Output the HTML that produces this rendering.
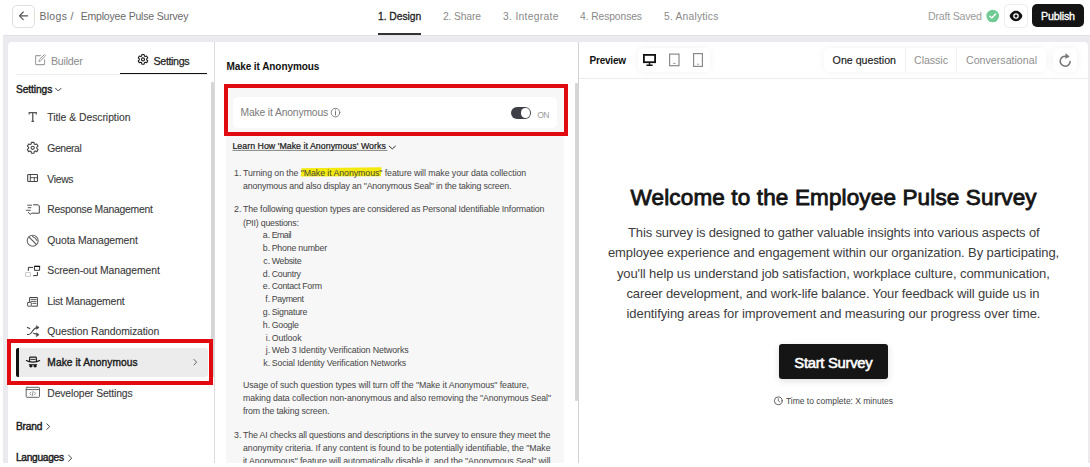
<!DOCTYPE html>
<html><head><meta charset="utf-8">
<style>
*{box-sizing:border-box;margin:0;padding:0}
html,body{width:1090px;height:467px;overflow:hidden;background:#fff;font-family:"Liberation Sans",sans-serif}
.a{position:absolute}
.t{position:absolute;white-space:nowrap;line-height:1}
#ic{position:absolute;left:0;top:0;width:1090px;height:467px;overflow:visible}
</style></head><body>
<!-- header -->
<div class="a" style="left:12px;top:5px;width:23px;height:23px;border:1px solid #e0e0e0;border-radius:5px"></div>
<div class="a" style="left:378px;top:33.4px;width:43px;height:1.8px;background:#333"></div>
<div class="a" style="left:1004px;top:4px;width:24px;height:24px;border:1px solid #eeeeee;border-radius:5px;background:#fff"></div>
<div class="a" style="left:1032px;top:4px;width:52px;height:23px;background:#141414;border-radius:5px"></div>

<!-- gray band -->
<div class="a" style="left:3px;top:35px;width:1087px;height:428px;background:#eaeaef;border-top:1px solid #e1e1e7"></div>
<!-- main white container -->
<div class="a" style="left:8px;top:42px;width:1080px;height:421px;background:#fff;border-radius:4px 4px 0 0"></div>

<!-- LEFT PANEL -->
<div class="a" style="left:16px;top:74px;width:192px;height:1px;background:#ededed"></div>
<div class="a" style="left:120px;top:72.5px;width:87px;height:1.8px;background:#111"></div>
<div class="a" style="left:211px;top:82px;width:3px;height:295px;background:#d6d6d6;border-radius:1px"></div>
<div class="a" style="left:16px;top:348px;width:192px;height:29px;background:#ececec;border-radius:3px"></div>
<div class="a" style="left:16px;top:348px;width:3px;height:29px;background:#111;border-radius:2px 0 0 2px"></div>

<!-- MIDDLE PANEL -->
<div class="a" style="left:214px;top:42px;width:1px;height:421px;background:#dcdcdc"></div>
<div class="a" style="left:226px;top:84px;width:338px;height:379px;background:#f7f7f7"></div>
<div class="a" style="left:233px;top:97px;width:324px;height:31px;background:#fff;border-radius:5px"></div>
<div class="a" style="left:511px;top:107px;width:20px;height:12px;background:#3f4047;border-radius:6px"></div>
<div class="a" style="left:520.5px;top:108.2px;width:9.6px;height:9.6px;background:#fff;border-radius:50%"></div>
<div class="a" style="left:575px;top:83px;width:3px;height:318px;background:#d6d6d6;border-radius:1px"></div>

<!-- RIGHT PANEL -->
<div class="a" style="left:578px;top:42px;width:1px;height:421px;background:#d2d2d2"></div>

<div class="a" style="left:579px;top:78px;width:509px;height:1px;background:#ececec"></div>
<div class="a" style="left:638px;top:48px;width:72px;height:24px;background:#fff;border-radius:5px;box-shadow:0 0 9px rgba(0,0,0,0.055)"></div>
<div class="a" style="left:824px;top:48px;width:222px;height:24px;background:#fff;border-radius:5px;box-shadow:0 0 9px rgba(0,0,0,0.055)"></div>
<div class="a" style="left:905px;top:48px;width:1px;height:24px;background:#f0f0f0"></div>
<div class="a" style="left:956px;top:48px;width:1px;height:24px;background:#f0f0f0"></div>
<div class="a" style="left:1053px;top:48px;width:24px;height:24px;background:#fff;border-radius:5px;box-shadow:0 0 9px rgba(0,0,0,0.055)"></div>
<div class="a" style="left:779px;top:344px;width:109px;height:35px;background:#151515;border-radius:3px;box-shadow:0 2px 7px rgba(0,0,0,0.13)"></div>

<svg id="ic" viewBox="0 0 1090 467">
<g fill="none" stroke-linecap="round" stroke-linejoin="round">
<!-- back arrow -->
<path d="M27.6 15.8H19.5M23.2 12L19.5 15.8L23.2 19.6" stroke="#555" stroke-width="1.2"/>
<!-- draft saved check -->
<circle cx="992.7" cy="16" r="6.3" fill="#6fca93" stroke="none"/>
<path d="M989.8 16.2L991.8 18.1L995.6 14.1" stroke="#fff" stroke-width="1.4"/>
<!-- eye -->
<path d="M1016 10.8C1012.6 10.8 1010.4 13.4 1009.6 16C1010.4 18.6 1012.6 21.2 1016 21.2C1019.4 21.2 1021.6 18.6 1022.4 16C1021.6 13.4 1019.4 10.8 1016 10.8Z" fill="#111" stroke="none"/>
<circle cx="1016" cy="16" r="2.8" fill="#fff" stroke="none"/>
<circle cx="1016" cy="16" r="1.5" fill="#111" stroke="none"/>

<!-- builder icon -->
<path d="M40.5 55.6H36.4C35.9 55.6 35.6 55.9 35.6 56.4V63.8C35.6 64.3 35.9 64.6 36.4 64.6H43.8C44.3 64.6 44.6 64.3 44.6 63.8V59.8" stroke="#a0a0a0" stroke-width="1.1"/>
<path d="M39 61.2L39.4 59.6L44.4 54.6L45.6 55.8L40.6 60.8Z" stroke="#9a9a9a" stroke-width="1"/>
<!-- settings tab gear -->
<path d="M141.61 55.97 L141.88 54.53 L144.12 54.53 L144.39 55.97 L145.28 56.48 L146.66 55.99 L147.78 57.94 L146.66 58.89 L146.66 59.91 L147.78 60.86 L146.66 62.81 L145.28 62.32 L144.39 62.83 L144.12 64.27 L141.88 64.27 L141.61 62.83 L140.72 62.32 L139.34 62.81 L138.22 60.86 L139.34 59.91 L139.34 58.89 L138.22 57.94 L139.34 55.99 L140.72 56.48Z" stroke="#1a1a1a" stroke-width="1.1"/>
<circle cx="143" cy="59.4" r="1.5" stroke="#1a1a1a" stroke-width="1.1"/>
<!-- settings chevron -->
<path d="M55.5 88.2L58.3 91L61.1 88.2" stroke="#333" stroke-width="0.9"/>

<!-- T icon -->
<path d="M29.2 114.6V112.6H36.3V114.6" stroke="#555" stroke-width="1.2" stroke-linecap="butt" stroke-linejoin="miter"/>
<path d="M32.75 112.6V121.3M31.4 121.3H34.1" stroke="#555" stroke-width="1.3" stroke-linecap="butt"/>
<!-- gear general -->
<path d="M31.16 144.00 L31.44 142.34 L33.96 142.34 L34.24 144.00 L35.22 144.57 L36.80 143.98 L38.06 146.16 L36.76 147.23 L36.76 148.37 L38.06 149.44 L36.80 151.62 L35.22 151.03 L34.24 151.60 L33.96 153.26 L31.44 153.26 L31.16 151.60 L30.18 151.03 L28.60 151.62 L27.34 149.44 L28.64 148.37 L28.64 147.23 L27.34 146.16 L28.60 143.98 L30.18 144.57Z" stroke="#444" stroke-width="1.1"/>
<circle cx="32.7" cy="147.8" r="1.6" stroke="#444" stroke-width="1.1"/>
<!-- views -->
<rect x="27.7" y="174.5" width="9.8" height="7" rx="0.8" stroke="#444" stroke-width="1.1"/>
<path d="M30.3 174.5V181.5M30.3 177.7H37.5M34.3 177.7V181.5" stroke="#444" stroke-width="0.9"/>
<!-- response mgmt -->
<path d="M33.6 204.8H38.2L39.3 206V213.2H31.8L30.2 214.4L28.4 212.4" stroke="#444" stroke-width="1"/>
<path d="M27.6 205.2H31.6M28.2 207.7H30.9M26.3 210.3H30.4" stroke="#444" stroke-width="0.9"/>
<!-- quota -->
<circle cx="32.7" cy="240.8" r="5.5" stroke="#666" stroke-width="1.1"/>
<path d="M29 237L36.4 244.5M32.5 236.5C34.6 237.4 36 238.6 36.9 240.5" stroke="#666" stroke-width="1.1"/>
<!-- screen-out -->
<rect x="34.8" y="266.4" width="4.8" height="3.9" stroke="#333" stroke-width="1"/>
<path d="M34.8 266.4H39.6" stroke="#111" stroke-width="1.3"/>
<rect x="25.9" y="272.6" width="4.7" height="3.7" stroke="#c4c4c4" stroke-width="0.9"/>
<path d="M28.3 270.4V267.4H32.6M37.4 272.4V275.6H33.6" stroke="#333" stroke-width="1"/>
<!-- list mgmt -->
<path d="M29.6 301.5V297.5H37.4V306.2H31.8" stroke="#444" stroke-width="1"/>
<path d="M31 299.4H36M31 301.4H36M32.8 303.4H36" stroke="#444" stroke-width="0.9"/>
<rect x="27.6" y="302.4" width="3.7" height="3.8" rx="0.5" stroke="#444" stroke-width="0.9"/>
<!-- shuffle -->
<path d="M27.4 327.4L29.8 328.6M27.4 334.5H28.8C30.6 334.5 31.2 333 32.4 331.2C33.8 329 35 327.6 37.6 327.5M33.4 333.2L37.6 334.6" stroke="#444" stroke-width="1.1"/>
<path d="M36.6 325.8L39.1 327.5L36.6 329.2Z M36.6 333L39.1 334.7L36.6 336.4Z" fill="#444" stroke="#444" stroke-width="0.6"/>
<!-- anonymous -->
<path d="M29.6 361V358C29.6 357.4 30 357.1 30.6 357.1H35.4C36 357.1 36.4 357.4 36.4 358V361" stroke="#1a1a1a" stroke-width="1.1"/>
<path d="M30.8 359.4H35.2" stroke="#1a1a1a" stroke-width="0.9"/>
<path d="M26.4 360.6C28 361.8 30 362.2 33 362.2C36 362.2 38 361.8 39.6 360.6" stroke="#1a1a1a" stroke-width="1.2"/>
<path d="M29.3 364.6H36.7" stroke="#1a1a1a" stroke-width="0.9"/>
<ellipse cx="30.9" cy="366.1" rx="1.7" ry="1.3" fill="#1a1a1a" stroke="none"/>
<ellipse cx="35.1" cy="366.1" rx="1.7" ry="1.3" fill="#1a1a1a" stroke="none"/>
<!-- chevron highlighted -->
<path d="M194 359.4L196.6 362.2L194 365" stroke="#555" stroke-width="0.9"/>
<!-- developer -->
<rect x="26.2" y="387.3" width="13.3" height="10" rx="0.8" stroke="#666" stroke-width="1"/>
<path d="M26.2 389.6H39.5" stroke="#666" stroke-width="1"/>
<path d="M30.9 392.2L29.7 393.5L30.9 394.8M34.5 392.2L35.7 393.5L34.5 394.8M33.1 391.4L32.3 395.6" stroke="#777" stroke-width="0.8"/>
<!-- brand/languages chevrons -->
<path d="M46.8 423.8L49.8 426.6L46.8 429.4" stroke="#333" stroke-width="0.9"/>
<path d="M68.6 455.2L71.8 458.2L68.6 461.2" stroke="#333" stroke-width="0.9"/>

<!-- middle: info icon -->
<circle cx="335.5" cy="112.6" r="4.3" stroke="#777" stroke-width="0.9"/>
<path d="M335.5 111.6V115" stroke="#777" stroke-width="1"/>
<circle cx="335.5" cy="109.9" r="0.55" fill="#777" stroke="none"/>
<!-- learn chevron -->
<path d="M389.2 146.2L392.3 148.9L395.4 146.2" stroke="#333" stroke-width="1"/>
<path d="M232.5 150.4H387.5" stroke="#777" stroke-width="0.9" stroke-linecap="butt"/>

<!-- right: devices -->
<rect x="643.9" y="54.9" width="11.2" height="7.3" stroke="#111" stroke-width="1.8" stroke-linejoin="miter"/>
<path d="M649.5 62.6V64.9M646.4 65.3H652.6" stroke="#111" stroke-width="1.4" stroke-linecap="butt"/>
<rect x="669.6" y="54.1" width="9.4" height="11.6" stroke="#8a8a8a" stroke-width="1.2" stroke-linejoin="miter"/>
<path d="M673.3 63.4H675.3" stroke="#8a8a8a" stroke-width="0.8"/>
<rect x="693.6" y="53.6" width="8.8" height="12.8" stroke="#8a8a8a" stroke-width="1.2" stroke-linejoin="miter"/>
<path d="M697.6 64.2H698.4" stroke="#8a8a8a" stroke-width="1"/>
<!-- refresh -->
<path d="M1067.6 56.8A5 5 0 1 0 1070.2 61.4" stroke="#777" stroke-width="1.5"/>
<path d="M1066 53.8L1069.3 56.6L1065.6 58.3Z" fill="#777" stroke="#777" stroke-width="0.5"/>
<!-- clock -->
<circle cx="778.3" cy="400.8" r="3.9" stroke="#555" stroke-width="0.9"/>
<path d="M778.3 398.6V400.9L779.8 402" stroke="#555" stroke-width="0.8"/>
</g>
<!-- highlighter -->
<path d="M301.5 168.2L381.5 167.3L381 176.3L300.8 176.6Z" fill="#f3ea0b"/>
</svg>
<!-- red boxes -->
<div class="a" style="left:7px;top:339px;width:206px;height:46px;border:4px solid #e10a10"></div>
<div class="a" style="left:224px;top:84px;width:344px;height:52px;border:4px solid #e10a10"></div>
<div class="t" style="left:39.40px;top:11.00px;font-size:10.5px;font-weight:400;color:#6a6a6a;letter-spacing:0.315px;">Blogs /</div>
<div class="t" style="left:80.70px;top:11.00px;font-size:10.5px;font-weight:400;color:#6a6a6a;letter-spacing:-0.184px;">Employee Pulse Survey</div>
<div class="t" style="left:378.00px;top:12.00px;font-size:10.3px;font-weight:400;color:#1f1f1f;letter-spacing:-0.027px;-webkit-text-stroke:0.3px #1f1f1f;">1. Design</div>
<div class="t" style="left:443.00px;top:12.00px;font-size:10.3px;font-weight:400;color:#8a8a8a;letter-spacing:-0.134px;">2. Share</div>
<div class="t" style="left:503.00px;top:12.00px;font-size:10.3px;font-weight:400;color:#8a8a8a;letter-spacing:0.310px;">3. Integrate</div>
<div class="t" style="left:580.00px;top:12.00px;font-size:10.3px;font-weight:400;color:#8a8a8a;letter-spacing:-0.088px;">4. Responses</div>
<div class="t" style="left:664.00px;top:12.00px;font-size:10.3px;font-weight:400;color:#8a8a8a;letter-spacing:0.201px;">5. Analytics</div>
<div class="t" style="left:928.00px;top:11.00px;font-size:10.7px;font-weight:400;color:#9b9b9b;letter-spacing:-0.244px;">Draft Saved</div>
<div class="t" style="left:1041.00px;top:11.00px;font-size:10.7px;font-weight:400;color:#ffffff;letter-spacing:-0.177px;-webkit-text-stroke:0.35px #ffffff;">Publish</div>
<div class="t" style="left:51.00px;top:56.00px;font-size:10.7px;font-weight:400;color:#8c8c8c;letter-spacing:-0.264px;">Builder</div>
<div class="t" style="left:153.60px;top:56.00px;font-size:10.7px;font-weight:400;color:#1f1f1f;letter-spacing:-0.375px;-webkit-text-stroke:0.25px #1f1f1f;">Settings</div>
<div class="t" style="left:16.00px;top:85.00px;font-size:10.2px;font-weight:400;color:#1a1a1a;letter-spacing:-0.073px;-webkit-text-stroke:0.4px #1a1a1a;">Settings</div>
<div class="t" style="left:47.30px;top:113.00px;font-size:10.4px;font-weight:400;color:#3a3a3a;letter-spacing:-0.040px;-webkit-text-stroke:0.1px #3a3a3a;">Title &amp; Description</div>
<div class="t" style="left:47.30px;top:144.00px;font-size:10.4px;font-weight:400;color:#3a3a3a;letter-spacing:-0.411px;-webkit-text-stroke:0.1px #3a3a3a;">General</div>
<div class="t" style="left:47.30px;top:175.00px;font-size:10.4px;font-weight:400;color:#3a3a3a;letter-spacing:-0.333px;-webkit-text-stroke:0.1px #3a3a3a;">Views</div>
<div class="t" style="left:47.30px;top:205.00px;font-size:10.4px;font-weight:400;color:#3a3a3a;letter-spacing:-0.268px;-webkit-text-stroke:0.1px #3a3a3a;">Response Management</div>
<div class="t" style="left:47.30px;top:236.00px;font-size:10.4px;font-weight:400;color:#3a3a3a;letter-spacing:-0.083px;-webkit-text-stroke:0.1px #3a3a3a;">Quota Management</div>
<div class="t" style="left:47.30px;top:266.00px;font-size:10.4px;font-weight:400;color:#3a3a3a;letter-spacing:-0.094px;-webkit-text-stroke:0.1px #3a3a3a;">Screen-out Management</div>
<div class="t" style="left:47.30px;top:297.00px;font-size:10.4px;font-weight:400;color:#3a3a3a;letter-spacing:-0.166px;-webkit-text-stroke:0.1px #3a3a3a;">List Management</div>
<div class="t" style="left:47.30px;top:327.00px;font-size:10.4px;font-weight:400;color:#3a3a3a;letter-spacing:-0.090px;-webkit-text-stroke:0.1px #3a3a3a;">Question Randomization</div>
<div class="t" style="left:47.30px;top:358.00px;font-size:10.2px;font-weight:400;color:#1a1a1a;letter-spacing:0.093px;-webkit-text-stroke:0.38px #1a1a1a;">Make it Anonymous</div>
<div class="t" style="left:47.30px;top:389.00px;font-size:10.4px;font-weight:400;color:#3a3a3a;letter-spacing:-0.141px;-webkit-text-stroke:0.1px #3a3a3a;">Developer Settings</div>
<div class="t" style="left:16.00px;top:422.00px;font-size:10.2px;font-weight:400;color:#1a1a1a;letter-spacing:-0.172px;-webkit-text-stroke:0.4px #1a1a1a;">Brand</div>
<div class="t" style="left:16.00px;top:453.00px;font-size:10.2px;font-weight:400;color:#1a1a1a;letter-spacing:-0.303px;-webkit-text-stroke:0.4px #1a1a1a;">Languages</div>
<div class="t" style="left:226.40px;top:62.00px;font-size:10px;font-weight:700;color:#111;letter-spacing:-0.068px;">Make it Anonymous</div>
<div class="t" style="left:240.50px;top:108.00px;font-size:10.3px;font-weight:400;color:#7a7a7a;letter-spacing:-0.135px;">Make it Anonymous</div>
<div class="t" style="left:537.20px;top:111.00px;font-size:8.6px;font-weight:400;color:#9a9a9a;letter-spacing:-0.691px;">ON</div>
<div class="t" style="left:232.40px;top:142.00px;font-size:8.8px;font-weight:400;color:#1a1a1a;letter-spacing:0.032px;-webkit-text-stroke:0.22px #1a1a1a;">Learn How 'Make it Anonymous' Works</div>
<div class="t" style="left:234.10px;top:169.00px;font-size:8.8px;font-weight:400;color:#454545;letter-spacing:0.000px;">1.</div>
<div class="t" style="left:243.00px;top:169.00px;font-size:8.8px;font-weight:400;color:#454545;letter-spacing:-0.074px;">Turning on the &quot;Make it Anonymous&quot; feature will make your data collection</div>
<div class="t" style="left:243.00px;top:182.00px;font-size:8.8px;font-weight:400;color:#454545;letter-spacing:-0.167px;">anonymous and also display an &quot;Anonymous Seal&quot; in the taking screen.</div>
<div class="t" style="left:234.10px;top:205.00px;font-size:8.8px;font-weight:400;color:#454545;letter-spacing:0.000px;">2.</div>
<div class="t" style="left:243.00px;top:205.00px;font-size:8.8px;font-weight:400;color:#454545;letter-spacing:-0.133px;">The following question types are considered as Personal Identifiable Information</div>
<div class="t" style="left:243.00px;top:219.00px;font-size:8.8px;font-weight:400;color:#454545;letter-spacing:-0.218px;">(PII) questions:</div>
<div class="t" style="right:819.80px;top:231.00px;font-size:8.8px;font-weight:400;color:#454545;letter-spacing:0.000px;">a.</div>
<div class="t" style="left:271.70px;top:231.00px;font-size:8.8px;font-weight:400;color:#454545;letter-spacing:-0.550px;">Email</div>
<div class="t" style="right:819.80px;top:244.00px;font-size:8.8px;font-weight:400;color:#454545;letter-spacing:0.000px;">b.</div>
<div class="t" style="left:271.70px;top:244.00px;font-size:8.8px;font-weight:400;color:#454545;letter-spacing:-0.211px;">Phone number</div>
<div class="t" style="right:819.80px;top:257.00px;font-size:8.8px;font-weight:400;color:#454545;letter-spacing:0.000px;">c.</div>
<div class="t" style="left:271.70px;top:257.00px;font-size:8.8px;font-weight:400;color:#454545;letter-spacing:-0.288px;">Website</div>
<div class="t" style="right:819.80px;top:270.00px;font-size:8.8px;font-weight:400;color:#454545;letter-spacing:0.000px;">d.</div>
<div class="t" style="left:271.70px;top:270.00px;font-size:8.8px;font-weight:400;color:#454545;letter-spacing:-0.252px;">Country</div>
<div class="t" style="right:819.80px;top:282.00px;font-size:8.8px;font-weight:400;color:#454545;letter-spacing:0.000px;">e.</div>
<div class="t" style="left:271.70px;top:282.00px;font-size:8.8px;font-weight:400;color:#454545;letter-spacing:-0.272px;">Contact Form</div>
<div class="t" style="right:819.80px;top:295.00px;font-size:8.8px;font-weight:400;color:#454545;letter-spacing:0.000px;">f.</div>
<div class="t" style="left:271.70px;top:295.00px;font-size:8.8px;font-weight:400;color:#454545;letter-spacing:-0.403px;">Payment</div>
<div class="t" style="right:819.80px;top:308.00px;font-size:8.8px;font-weight:400;color:#454545;letter-spacing:0.000px;">g.</div>
<div class="t" style="left:271.70px;top:308.00px;font-size:8.8px;font-weight:400;color:#454545;letter-spacing:-0.246px;">Signature</div>
<div class="t" style="right:819.80px;top:321.00px;font-size:8.8px;font-weight:400;color:#454545;letter-spacing:0.000px;">h.</div>
<div class="t" style="left:271.70px;top:321.00px;font-size:8.8px;font-weight:400;color:#454545;letter-spacing:-0.235px;">Google</div>
<div class="t" style="right:819.80px;top:334.00px;font-size:8.8px;font-weight:400;color:#454545;letter-spacing:0.000px;">i.</div>
<div class="t" style="left:271.70px;top:334.00px;font-size:8.8px;font-weight:400;color:#454545;letter-spacing:-0.071px;">Outlook</div>
<div class="t" style="right:819.80px;top:346.00px;font-size:8.8px;font-weight:400;color:#454545;letter-spacing:0.000px;">j.</div>
<div class="t" style="left:271.70px;top:346.00px;font-size:8.8px;font-weight:400;color:#454545;letter-spacing:-0.107px;">Web 3 Identity Verification Networks</div>
<div class="t" style="right:819.80px;top:359.00px;font-size:8.8px;font-weight:400;color:#454545;letter-spacing:0.000px;">k.</div>
<div class="t" style="left:271.70px;top:359.00px;font-size:8.8px;font-weight:400;color:#454545;letter-spacing:-0.135px;">Social Identity Verification Networks</div>
<div class="t" style="left:243.00px;top:381.00px;font-size:8.8px;font-weight:400;color:#454545;letter-spacing:-0.083px;">Usage of such question types will turn off the &quot;Make it Anonymous&quot; feature,</div>
<div class="t" style="left:243.00px;top:394.00px;font-size:8.8px;font-weight:400;color:#454545;letter-spacing:-0.118px;">making data collection non-anonymous and also removing the &quot;Anonymous Seal&quot;</div>
<div class="t" style="left:243.00px;top:407.00px;font-size:8.8px;font-weight:400;color:#454545;letter-spacing:-0.136px;">from the taking screen.</div>
<div class="t" style="left:234.10px;top:431.00px;font-size:8.8px;font-weight:400;color:#454545;letter-spacing:0.000px;">3.</div>
<div class="t" style="left:243.00px;top:431.00px;font-size:8.8px;font-weight:400;color:#454545;letter-spacing:-0.158px;">The AI checks all questions and descriptions in the survey to ensure they meet the</div>
<div class="t" style="left:243.00px;top:444.00px;font-size:8.8px;font-weight:400;color:#454545;letter-spacing:-0.061px;">anonymity criteria. If any content is found to be potentially identifiable, the &quot;Make</div>
<div class="t" style="left:243.00px;top:457.00px;font-size:8.8px;font-weight:400;color:#454545;letter-spacing:-0.098px;">it Anonymous&quot; feature will automatically disable it, and the &quot;Anonymous Seal&quot; will</div>
<div class="t" style="left:589.60px;top:56.00px;font-size:10px;font-weight:700;color:#111;letter-spacing:-0.235px;">Preview</div>
<div class="t" style="left:832.60px;top:55.00px;font-size:10.65px;font-weight:400;color:#1a1a1a;letter-spacing:0.008px;-webkit-text-stroke:0.15px #1a1a1a;">One question</div>
<div class="t" style="left:914.00px;top:55.00px;font-size:10.65px;font-weight:400;color:#8f8f8f;letter-spacing:-0.049px;">Classic</div>
<div class="t" style="left:966.00px;top:55.00px;font-size:10.65px;font-weight:400;color:#8f8f8f;letter-spacing:0.001px;">Conversational</div>
<div class="t" style="left:630.60px;top:187.00px;font-size:22.5px;font-weight:400;color:#151515;letter-spacing:0.142px;-webkit-text-stroke:0.85px #151515;">Welcome to the Employee Pulse Survey</div>
<div class="t" style="left:628.10px;top:226.00px;font-size:13px;font-weight:400;color:#3d3d3d;letter-spacing:-0.162px;">This survey is designed to gather valuable insights into various aspects of</div>
<div class="t" style="left:607.90px;top:246.00px;font-size:13px;font-weight:400;color:#3d3d3d;letter-spacing:-0.091px;">employee experience and engagement within our organization. By participating,</div>
<div class="t" style="left:616.90px;top:267.00px;font-size:13px;font-weight:400;color:#3d3d3d;letter-spacing:-0.088px;">you'll help us understand job satisfaction, workplace culture, communication,</div>
<div class="t" style="left:626.50px;top:287.00px;font-size:13px;font-weight:400;color:#3d3d3d;letter-spacing:-0.136px;">career development, and work-life balance. Your feedback will guide us in</div>
<div class="t" style="left:626.50px;top:307.00px;font-size:13px;font-weight:400;color:#3d3d3d;letter-spacing:-0.073px;">identifying areas for improvement and measuring our progress over time.</div>
<div class="t" style="left:794.30px;top:356.00px;font-size:14.8px;font-weight:400;color:#ffffff;letter-spacing:-0.275px;-webkit-text-stroke:0.55px #ffffff;">Start Survey</div>
<div class="t" style="left:786.00px;top:397.00px;font-size:8.5px;font-weight:400;color:#444;letter-spacing:-0.016px;">Time to complete: X minutes</div>
<!-- bottom white strip -->
<div class="a" style="left:0;top:463px;width:1090px;height:4px;background:#fff"></div>
</body></html>
